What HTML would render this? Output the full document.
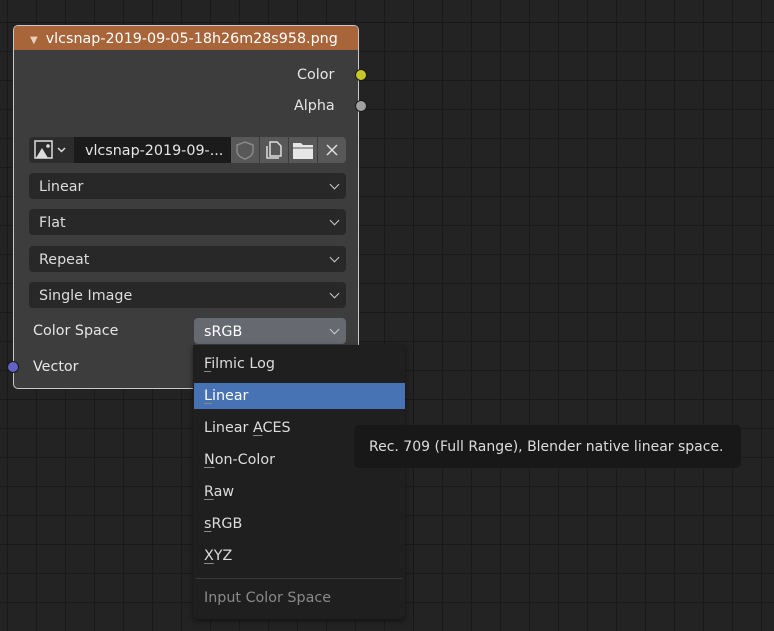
<!DOCTYPE html>
<html><head><meta charset="utf-8"><style>
*{margin:0;padding:0;box-sizing:border-box}
body{width:774px;height:631px;overflow:hidden;position:relative;font-family:"DejaVu Sans","Liberation Sans",sans-serif;font-size:14.3px;color:#e6e6e6;
background-color:#232323;
background-image:linear-gradient(to right,#1a1a1a 1px,transparent 1px),linear-gradient(to bottom,#1a1a1a 1px,transparent 1px);
background-size:29px 29px;background-position:7px 22px;}
.maj{position:absolute;background:#171717}
.node{position:absolute;left:13px;top:25px;width:346px;height:364px;border:1px solid #c8c8c8;border-radius:5px;background:rgba(63,63,63,0.95);overflow:hidden}
.hdr{height:24px;background:#a8653a;color:#fff;padding-left:16px;line-height:26px;font-size:14.3px}
.a{position:absolute}
.sock{position:absolute;width:12px;height:12px;border-radius:50%;border:1px solid #1a1a1a}
.dd{position:absolute;left:29px;width:317px;height:26px;background:#282828;border-radius:4px;padding-left:10px;line-height:28px;color:#dcdcdc}
.chev{position:absolute;right:8px;top:8px;width:7px;height:7px;border-right:1.5px solid #ccc;border-bottom:1.5px solid #ccc;transform:rotate(45deg)}
.menu{position:absolute;left:193px;top:345px;width:212px;height:274px;background:#1f1f1f;border-radius:0 0 4px 4px;box-shadow:0 2px 6px rgba(0,0,0,.5)}
.it{position:absolute;left:11px;color:#dcdcdc}
.u{text-decoration:underline;text-decoration-color:#888;text-underline-offset:3px}
.btn{position:absolute;top:137px;width:28px;height:26px;background:#585858}
</style></head><body>
<div class="maj" style="left:413px;top:0;width:1px;height:631px"></div>
<div class="maj" style="left:0;top:22px;width:774px;height:1px"></div>

<div class="node">
<div class="hdr"><span style="font-size:10px;margin-right:8px;color:#e8d0c0">▼</span>vlcsnap-2019-09-05-18h26m28s958.png</div>
</div>
<div class="a" style="left:297px;top:67px">Color</div>
<div class="a" style="left:294px;top:98px">Alpha</div>
<div class="sock" style="left:355px;top:69px;background:#c7c729"></div>
<div class="sock" style="left:355px;top:100px;background:#a1a1a1"></div>

<div class="a" style="left:29px;top:137px;width:45px;height:26px;background:#2c2c2c;border-radius:4px 0 0 4px">
<svg width="45" height="26"><path d="M6 4h17v17H6z" fill="none" stroke="#ddd" stroke-width="1.5"/><path d="M7 21l6-10 6 10z" fill="#ddd"/><circle cx="19" cy="9" r="1.8" fill="#ddd"/><path d="M29 11l3.5 3.5L36 11" fill="none" stroke="#ddd" stroke-width="1.5"/></svg></div>
<div class="a" style="left:74px;top:137px;width:157px;height:26px;background:#1b1b1b;line-height:28px;padding-left:11px">vlcsnap-2019-09-...</div>
<div class="btn" style="left:231px"><svg width="28" height="26"><path d="M14 5l8 3v6c0 4-4 6.5-8 8-4-1.5-8-4-8-8V8z" fill="none" stroke="#888" stroke-width="1.5"/></svg></div>
<div class="btn" style="left:260px"><svg width="28" height="26"><path d="M7 9v12h12" fill="none" stroke="#ddd" stroke-width="1.5"/><path d="M10 5h7l4 4v10H10z" fill="none" stroke="#ddd" stroke-width="1.5"/></svg></div>
<div class="btn" style="left:289px"><svg width="28" height="26"><path d="M4 6h8l2 2h10v14H4z" fill="#e6e6e6"/><path d="M4 11h20" stroke="#585858" stroke-width="1"/></svg></div>
<div class="btn" style="left:318px;border-radius:0 4px 4px 0"><svg width="28" height="26"><path d="M9 8l10 10M19 8L9 18" stroke="#ddd" stroke-width="1.5"/></svg></div>

<div class="dd" style="top:173px">Linear<div class="chev"></div></div>
<div class="dd" style="top:209px">Flat<div class="chev"></div></div>
<div class="dd" style="top:246px">Repeat<div class="chev"></div></div>
<div class="dd" style="top:282px">Single Image<div class="chev"></div></div>
<div class="a" style="left:33px;top:323px">Color Space</div>
<div class="dd" style="left:194px;width:152px;top:318px;background:#676970;color:#fff">sRGB<div class="chev"></div></div>
<div class="a" style="left:33px;top:359px">Vector</div>
<div class="sock" style="left:7px;top:361px;background:#6363c7"></div>

<div class="menu">
<div class="it" style="top:11px"><span class="u">F</span>ilmic Log</div>
<div class="a" style="left:1px;top:38px;width:211px;height:26px;background:#4772b3"></div>
<div class="it" style="top:43px;color:#fff"><span class="u">L</span>inear</div>
<div class="it" style="top:75px">Linear <span class="u">A</span>CES</div>
<div class="it" style="top:107px"><span class="u">N</span>on-Color</div>
<div class="it" style="top:139px"><span class="u">R</span>aw</div>
<div class="it" style="top:171px"><span class="u">s</span>RGB</div>
<div class="it" style="top:203px"><span class="u">X</span>YZ</div>
<div class="a" style="left:3px;top:233px;width:206px;height:1px;background:#3a3a3a"></div>
<div class="it" style="top:245px;color:#8a8a8a">Input Color Space</div>
</div>

<div class="a" style="left:354px;top:425px;width:387px;height:43px;background:#181818;border-radius:5px;padding-left:15px;line-height:45px;color:#dcdcdc;font-size:14px">Rec. 709 (Full Range), Blender native linear space.</div>
</body></html>
